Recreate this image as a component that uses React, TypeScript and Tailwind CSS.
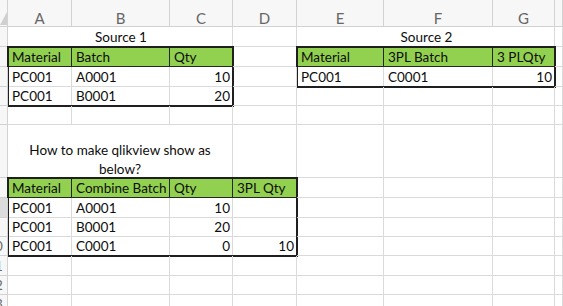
import React from "react";

// Spreadsheet view: column letters, row numbers, gridlines and three bordered tables.

const GRID = "border-r border-b border-[#dadada]";
const HEAD = "border-r border-b border-[#262626] bg-[#92d050]";

type Align = "left" | "right" | "center";

function Cell({
  text = "",
  align = "left",
  head = false,
  className = "",
}: {
  text?: string;
  align?: Align;
  head?: boolean;
  className?: string;
}) {
  const justify =
    align === "right" ? "justify-end" : align === "center" ? "justify-center" : "justify-start";
  return (
    <div
      className={`flex items-center overflow-hidden whitespace-nowrap pl-[4px] pr-[2px] pt-[2px] text-[#0d0d0d] ${justify} ${
        head ? HEAD : GRID
      } ${className}`}
    >
      {text}
    </div>
  );
}

function ColHead({ label = "" }: { label?: string }) {
  return (
    <div className="flex items-center justify-center pt-[10px] bg-[#f7f7f7] border-r border-b border-[#d2d2d2] text-[15px] text-[#666666]">
      {label}
    </div>
  );
}

// Only the last digit of two-digit row numbers peeks into the narrow header strip.
function RowHead({ n, active = false }: { n?: number; active?: boolean }) {
  return (
    <div
      className={`flex justify-end overflow-hidden border-r border-b border-[#d2d2d2] ${
        active ? "bg-[#dcdcdc]" : "bg-[#f7f7f7]"
      }`}
    >
      <div className="w-[24px] shrink-0 flex items-center justify-center pt-[2px] text-[#6a6a6a]">
        {n}
      </div>
    </div>
  );
}

function Corner() {
  return (
    <div className="flex items-end justify-end bg-[#f7f7f7] border-r border-b border-[#d2d2d2]">
      <svg width="7" height="26" viewBox="0 0 7 26" className="block">
        <polygon points="0,25 7,25 7,12" fill="#d0d0d0" />
      </svg>
    </div>
  );
}

function Blank() {
  return <div className={GRID} />;
}

export default function App() {
  return (
    <div className="w-[563px] h-[306px] overflow-hidden bg-white font-['Lato',sans-serif] text-[13.5px] leading-none">
      <div className="grid grid-cols-[8px_64px_98px_63px_64px_87px_109px_62px_8px] grid-rows-[27px_20px_20px_20px_19px_19px_53px_20px_20px_19px_19px_20px_19px_19px]">
        {/* column letters */}
        <Corner />
        <ColHead label="A" />
        <ColHead label="B" />
        <ColHead label="C" />
        <ColHead label="D" />
        <ColHead label="E" />
        <ColHead label="F" />
        <ColHead label="G" />
        <ColHead />

        {/* row 1: titles */}
        <RowHead />
        <Cell text="Source 1" align="center" className="col-span-3" />
        <Blank />
        <Cell text="Source 2" align="center" className="col-span-3" />
        <Blank />

        {/* row 2: both source tables start */}
        <RowHead />
        <div className="col-span-3 row-span-3 grid grid-cols-[64px_98px_63px] grid-rows-[20px_20px_19px] outline-2 outline-[#1f1f1f] -outline-offset-1">
          <Cell text="Material" head />
          <Cell text="Batch" head />
          <Cell text="Qty" head />
          <Cell text="PC001" />
          <Cell text="A0001" />
          <Cell text="10" align="right" />
          <Cell text="PC001" />
          <Cell text="B0001" />
          <Cell text="20" align="right" />
        </div>
        <Blank />
        <div className="col-span-3 row-span-2 grid grid-cols-[87px_109px_62px] grid-rows-[20px_20px] outline-2 outline-[#1f1f1f] -outline-offset-1">
          <Cell text="Material" head />
          <Cell text="3PL Batch" head />
          <Cell text="3 PLQty" head />
          <Cell text="PC001" />
          <Cell text="C0001" />
          <Cell text="10" align="right" />
        </div>
        <Blank />

        {/* row 3 */}
        <RowHead />
        <Blank />
        <Blank />

        {/* row 4 */}
        <RowHead />
        <Blank />
        <Blank />
        <Blank />
        <Blank />
        <Blank />

        {/* row 5 */}
        <RowHead />
        <Blank />
        <Blank />
        <Blank />
        <Blank />
        <Blank />
        <Blank />
        <Blank />
        <Blank />

        {/* row 6: wrapped question, bottom-aligned like a spreadsheet cell */}
        <RowHead />
        <div
          className={`col-span-3 flex flex-col items-center justify-end text-center leading-[19px] text-[#0d0d0d] ${GRID}`}
        >
          <div className="translate-y-[2px] flex flex-col items-center">
            <span>How to make qlikview show as</span>
            <span>below?</span>
          </div>
        </div>
        <Blank />
        <Blank />
        <Blank />
        <Blank />
        <Blank />

        {/* row 7: combined table */}
        <RowHead />
        <div className="col-span-4 row-span-4 grid grid-cols-[64px_98px_63px_64px] grid-rows-[20px_20px_19px_19px] outline-2 outline-[#1f1f1f] -outline-offset-1">
          <Cell text="Material" head />
          <Cell text="Combine Batch" head />
          <Cell text="Qty" head />
          <Cell text="3PL Qty" head />
          <Cell text="PC001" />
          <Cell text="A0001" />
          <Cell text="10" align="right" />
          <Cell />
          <Cell text="PC001" />
          <Cell text="B0001" />
          <Cell text="20" align="right" />
          <Cell />
          <Cell text="PC001" />
          <Cell text="C0001" />
          <Cell text="0" align="right" />
          <Cell text="10" align="right" />
        </div>
        <Blank />
        <Blank />
        <Blank />
        <Blank />

        {/* rows 8-10 beside the table */}
        <RowHead active />
        <Blank />
        <Blank />
        <Blank />
        <Blank />
        <RowHead />
        <Blank />
        <Blank />
        <Blank />
        <Blank />
        <RowHead n={10} />
        <Blank />
        <Blank />
        <Blank />
        <Blank />

        {/* rows 11-13 */}
        {[11, 12, 13].map((n) => (
          <React.Fragment key={n}>
            <RowHead n={n} />
            <Blank />
            <Blank />
            <Blank />
            <Blank />
            <Blank />
            <Blank />
            <Blank />
            <Blank />
          </React.Fragment>
        ))}
      </div>
    </div>
  );
}
